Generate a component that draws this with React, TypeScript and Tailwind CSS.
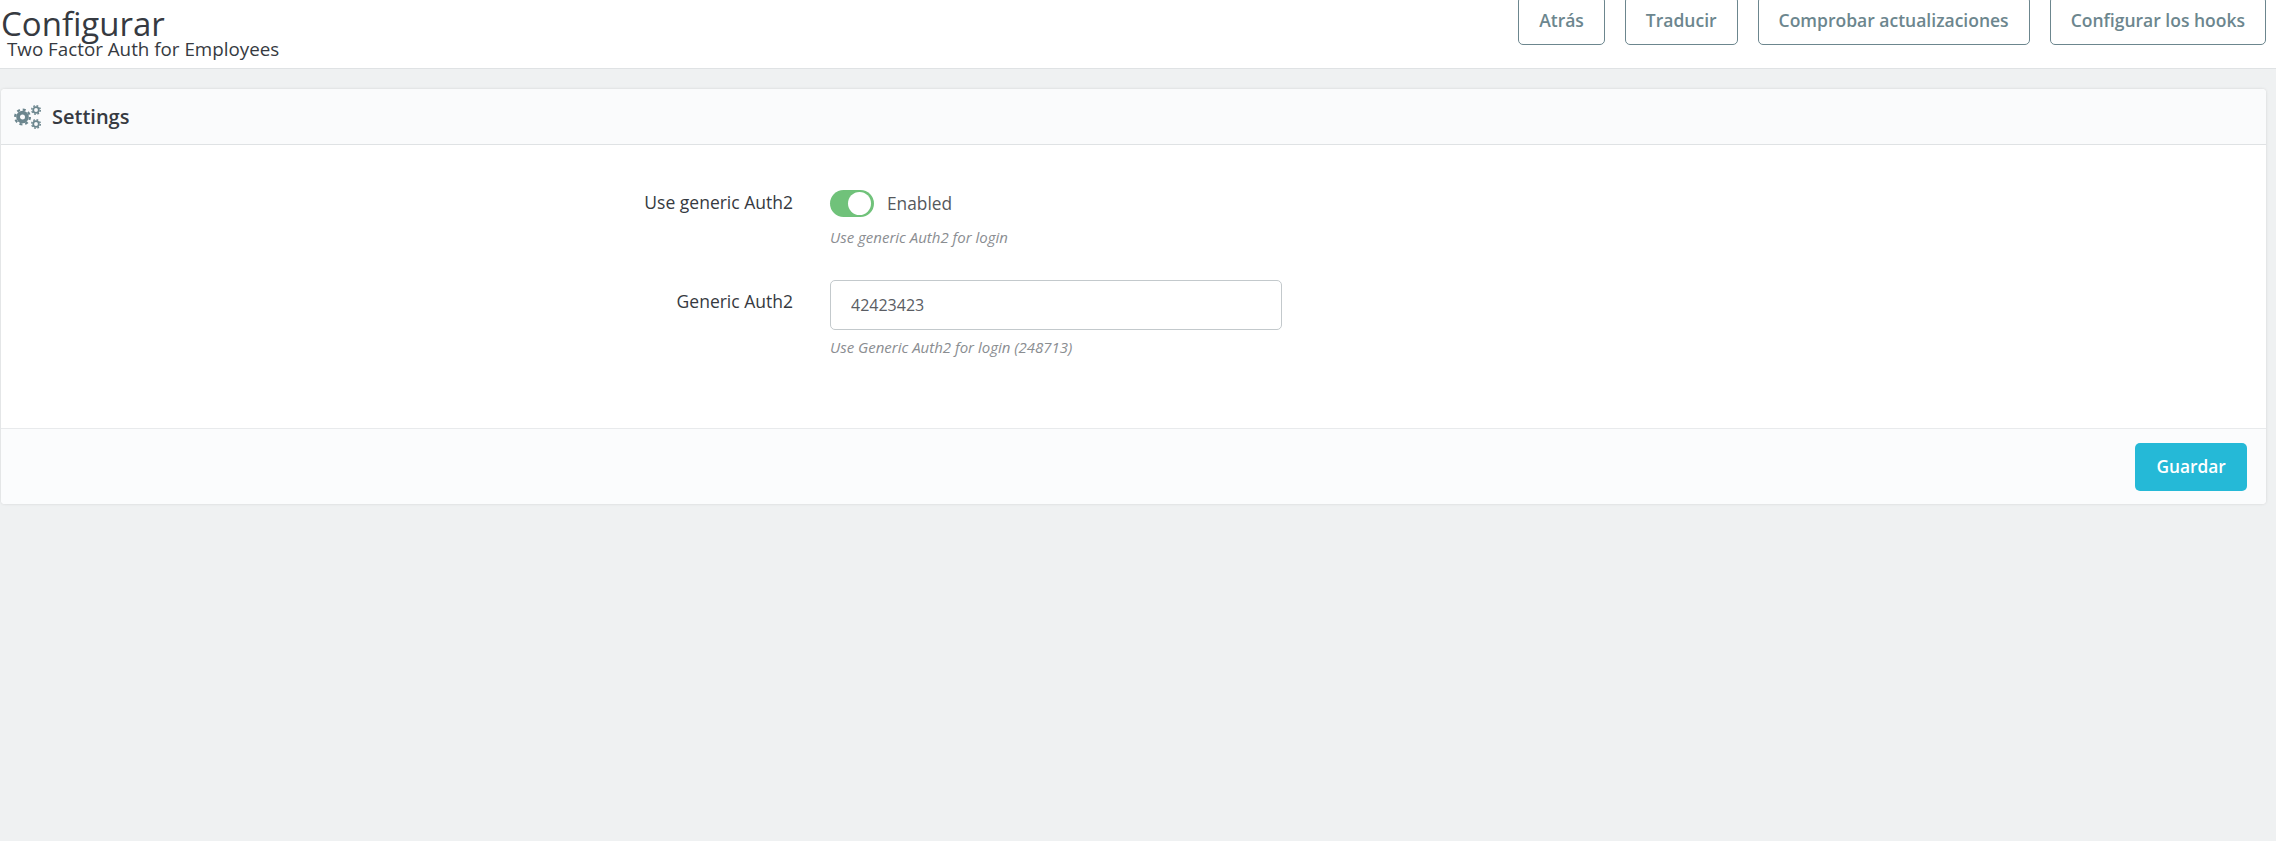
import React from "react";

const actions = ["Atrás", "Traducir", "Comprobar actualizaciones", "Configurar los hooks"];

// big gear on the left, two small ones on the right
const CogsIcon = () => (
  <svg viewBox="0 0 27 24" className="w-[27px] h-[24px] text-[#6c868e]" fill="none" stroke="currentColor">
    <circle cx="8.5" cy="12" r="4.4" strokeWidth="3.8" />
    <circle cx="8.5" cy="12" r="7.4" strokeWidth="2.2" strokeDasharray="3 2.81" />
    <circle cx="22" cy="5" r="2.8" strokeWidth="1.8" />
    <circle cx="22" cy="5" r="4.3" strokeWidth="1.4" strokeDasharray="1.8 1.58" />
    <circle cx="22" cy="19" r="2.8" strokeWidth="1.8" />
    <circle cx="22" cy="19" r="4.3" strokeWidth="1.4" strokeDasharray="1.8 1.58" />
  </svg>
);

const App: React.FC = () => {
  return (
    <div className="min-h-[841px] bg-[#eff1f2] font-['Open_Sans',sans-serif] text-[#363a41] overflow-hidden">
      <header className="h-[69px] bg-white border-b border-[#dfe2e4] flex justify-between pr-[10px]">
        <div>
          <h1 className="text-[33px] leading-[44px] pl-[1px] mt-[2px] font-normal">Configurar</h1>
          <p className="text-[18.8px] leading-[24px] pl-[7px] -mt-[9px]">Two Factor Auth for Employees</p>
        </div>
        <div className="flex gap-[20px] -mt-[4px]">
          {actions.map((label) => (
            <button
              key={label}
              className="h-[49px] px-[20px] border border-[#6c868e] rounded-[5px] text-[#6c868e] text-[17.5px] font-semibold bg-white"
            >
              {label}
            </button>
          ))}
        </div>
      </header>

      <section className="mt-[20px] ml-[1px] mr-[10px] h-[415px] bg-white rounded-[4px] shadow-[0_0_3px_rgba(0,0,0,0.12)] flex flex-col overflow-hidden">
        <div className="h-[56px] bg-[#fafbfc] border-b border-[#dfe2e4] flex items-center pl-[13px] gap-[11px] shrink-0">
          <CogsIcon />
          <h2 className="text-[20px] font-semibold">Settings</h2>
        </div>

        <div className="flex-1 pt-[45px]">
          <div className="flex">
            <label className="w-[792px] text-right text-[17.5px] leading-[24px]">Use generic Auth2</label>
            <div className="ml-[37px]">
              <div className="flex items-center gap-[13px] h-[27px]">
                <span className="relative w-[44px] h-[27px] rounded-full bg-[#70c27a] block">
                  <span className="absolute right-[3px] top-[2px] w-[23px] h-[23px] rounded-full bg-white" />
                </span>
                <span className="text-[17.3px] text-[#55585c]">Enabled</span>
              </div>
              <p className="mt-[10px] text-[15px] leading-[20px] italic text-[#8a8d91]">Use generic Auth2 for login</p>
            </div>
          </div>

          <div className="flex mt-[33px]">
            <label className="w-[792px] text-right text-[17.5px] leading-[24px] mt-[9px]">Generic Auth2</label>
            <div className="ml-[37px]">
              <input
                readOnly
                value="42423423"
                className="block w-[452px] h-[50px] px-[20px] border border-[#c3c9cc] rounded-[5px] text-[16px] text-[#5a5d63] bg-white outline-none"
              />
              <p className="mt-[7px] text-[15px] leading-[20px] italic text-[#8a8d91]">Use Generic Auth2 for login (248713)</p>
            </div>
          </div>
        </div>

        <div className="h-[76px] bg-[#fbfcfd] border-t border-[#e8eaec] flex justify-end items-start pt-[14px] pr-[19px] shrink-0">
          <button className="h-[48px] w-[112px] rounded-[5px] bg-[#25b9d7] text-white text-[17.3px] font-semibold">Guardar</button>
        </div>
      </section>
    </div>
  );
};

export default App;
